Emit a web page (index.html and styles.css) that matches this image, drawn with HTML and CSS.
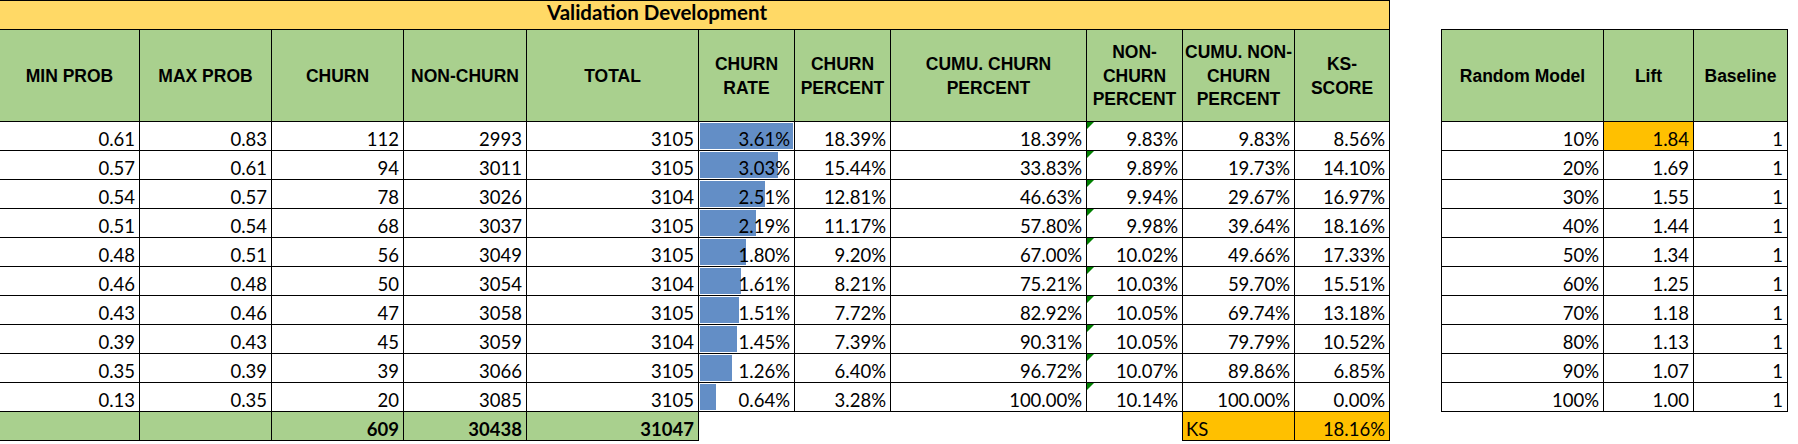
FILE: index.html
```html
<!DOCTYPE html>
<html lang="en">
<head>
<meta charset="utf-8">
<title>Validation Development</title>
<link rel="stylesheet" href="styles.css">
</head>
<body>
<div class="sheet">
  <div class="grid main">
    <div class="c title">Validation Development</div>

    <div class="c h">MIN PROB</div>
    <div class="c h">MAX PROB</div>
    <div class="c h">CHURN</div>
    <div class="c h">NON-CHURN</div>
    <div class="c h">TOTAL</div>
    <div class="c h">CHURN<br>RATE</div>
    <div class="c h">CHURN<br>PERCENT</div>
    <div class="c h">CUMU. CHURN<br>PERCENT</div>
    <div class="c h">NON-<br>CHURN<br>PERCENT</div>
    <div class="c h">CUMU. NON-<br>CHURN<br>PERCENT</div>
    <div class="c h">KS-<br>SCORE</div>

    <div class="c n">0.61</div><div class="c n">0.83</div><div class="c n">112</div><div class="c n">2993</div><div class="c n">3105</div>
    <div class="c n db"><span class="bar" style="width:93px"></span><span class="v">3.61%</span></div>
    <div class="c n">18.39%</div><div class="c n">18.39%</div>
    <div class="c n tc"><span class="tri"></span>9.83%</div><div class="c n">9.83%</div><div class="c n">8.56%</div>

    <div class="c n">0.57</div><div class="c n">0.61</div><div class="c n">94</div><div class="c n">3011</div><div class="c n">3105</div>
    <div class="c n db"><span class="bar" style="width:78px"></span><span class="v">3.03%</span></div>
    <div class="c n">15.44%</div><div class="c n">33.83%</div>
    <div class="c n tc"><span class="tri"></span>9.89%</div><div class="c n">19.73%</div><div class="c n">14.10%</div>

    <div class="c n">0.54</div><div class="c n">0.57</div><div class="c n">78</div><div class="c n">3026</div><div class="c n">3104</div>
    <div class="c n db"><span class="bar" style="width:65px"></span><span class="v">2.51%</span></div>
    <div class="c n">12.81%</div><div class="c n">46.63%</div>
    <div class="c n tc"><span class="tri"></span>9.94%</div><div class="c n">29.67%</div><div class="c n">16.97%</div>

    <div class="c n">0.51</div><div class="c n">0.54</div><div class="c n">68</div><div class="c n">3037</div><div class="c n">3105</div>
    <div class="c n db"><span class="bar" style="width:56px"></span><span class="v">2.19%</span></div>
    <div class="c n">11.17%</div><div class="c n">57.80%</div>
    <div class="c n tc"><span class="tri"></span>9.98%</div><div class="c n">39.64%</div><div class="c n">18.16%</div>

    <div class="c n">0.48</div><div class="c n">0.51</div><div class="c n">56</div><div class="c n">3049</div><div class="c n">3105</div>
    <div class="c n db"><span class="bar" style="width:46px"></span><span class="v">1.80%</span></div>
    <div class="c n">9.20%</div><div class="c n">67.00%</div>
    <div class="c n tc"><span class="tri"></span>10.02%</div><div class="c n">49.66%</div><div class="c n">17.33%</div>

    <div class="c n">0.46</div><div class="c n">0.48</div><div class="c n">50</div><div class="c n">3054</div><div class="c n">3104</div>
    <div class="c n db"><span class="bar" style="width:41px"></span><span class="v">1.61%</span></div>
    <div class="c n">8.21%</div><div class="c n">75.21%</div>
    <div class="c n tc"><span class="tri"></span>10.03%</div><div class="c n">59.70%</div><div class="c n">15.51%</div>

    <div class="c n">0.43</div><div class="c n">0.46</div><div class="c n">47</div><div class="c n">3058</div><div class="c n">3105</div>
    <div class="c n db"><span class="bar" style="width:39px"></span><span class="v">1.51%</span></div>
    <div class="c n">7.72%</div><div class="c n">82.92%</div>
    <div class="c n tc"><span class="tri"></span>10.05%</div><div class="c n">69.74%</div><div class="c n">13.18%</div>

    <div class="c n">0.39</div><div class="c n">0.43</div><div class="c n">45</div><div class="c n">3059</div><div class="c n">3104</div>
    <div class="c n db"><span class="bar" style="width:37px"></span><span class="v">1.45%</span></div>
    <div class="c n">7.39%</div><div class="c n">90.31%</div>
    <div class="c n tc"><span class="tri"></span>10.05%</div><div class="c n">79.79%</div><div class="c n">10.52%</div>

    <div class="c n">0.35</div><div class="c n">0.39</div><div class="c n">39</div><div class="c n">3066</div><div class="c n">3105</div>
    <div class="c n db"><span class="bar" style="width:32px"></span><span class="v">1.26%</span></div>
    <div class="c n">6.40%</div><div class="c n">96.72%</div>
    <div class="c n tc"><span class="tri"></span>10.07%</div><div class="c n">89.86%</div><div class="c n">6.85%</div>

    <div class="c n">0.13</div><div class="c n">0.35</div><div class="c n">20</div><div class="c n">3085</div><div class="c n">3105</div>
    <div class="c n db"><span class="bar" style="width:16px"></span><span class="v">0.64%</span></div>
    <div class="c n">3.28%</div><div class="c n">100.00%</div>
    <div class="c n tc"><span class="tri"></span>10.14%</div><div class="c n">100.00%</div><div class="c n">0.00%</div>

    <div class="c n f"></div><div class="c n f"></div><div class="c n f">609</div><div class="c n f">30438</div><div class="c n f">31047</div>
    <div class="c blank"></div><div class="c blank"></div><div class="c blank"></div><div class="c blank edge"></div>
    <div class="c n ks ks-label">KS</div><div class="c n ks">18.16%</div>
  </div>

  <div class="grid lift">
    <div class="c h">Random Model</div>
    <div class="c h">Lift</div>
    <div class="c h">Baseline</div>

    <div class="c n">10%</div><div class="c n hl">1.84</div><div class="c n">1</div>
    <div class="c n">20%</div><div class="c n">1.69</div><div class="c n">1</div>
    <div class="c n">30%</div><div class="c n">1.55</div><div class="c n">1</div>
    <div class="c n">40%</div><div class="c n">1.44</div><div class="c n">1</div>
    <div class="c n">50%</div><div class="c n">1.34</div><div class="c n">1</div>
    <div class="c n">60%</div><div class="c n">1.25</div><div class="c n">1</div>
    <div class="c n">70%</div><div class="c n">1.18</div><div class="c n">1</div>
    <div class="c n">80%</div><div class="c n">1.13</div><div class="c n">1</div>
    <div class="c n">90%</div><div class="c n">1.07</div><div class="c n">1</div>
    <div class="c n">100%</div><div class="c n">1.00</div><div class="c n">1</div>
  </div>
</div>
</body>
</html>
```

FILE: styles.css
```css
html, body {
  margin: 0;
  padding: 0;
  background: #ffffff;
}

body {
  font-family: "Lato", "Liberation Sans", sans-serif;
  color: #000000;
  overflow: hidden;
}

.sheet {
  display: flex;
  align-items: flex-start;
  gap: 51px;
}

.grid {
  display: grid;
  border-top: 1px solid #000;
  border-left: 1px solid #000;
}

.main {
  margin-left: -1px;
  grid-template-columns: 140px 132px 132px 123px 172px 96px 96px 196px 96px 112px 95px;
  grid-template-rows: 29px 92px repeat(11, 29px);
}

.lift {
  margin-top: 29px;
  grid-template-columns: 162px 90px 94px;
  grid-template-rows: 92px repeat(10, 29px);
}

.c {
  box-sizing: border-box;
  border-right: 1px solid #000;
  border-bottom: 1px solid #000;
  position: relative;
  min-width: 0;
  white-space: nowrap;
}

.title {
  grid-column: 1 / -1;
  background: #ffd966;
  font-family: "Lato", "Liberation Sans", sans-serif;
  font-weight: 700;
  font-size: 20.5px;
  line-height: 23.5px;
  text-align: center;
  padding-right: 75px;
}

.h {
  background: #a9d08e;
  font-family: "Liberation Sans", Arial, sans-serif;
  font-weight: 700;
  font-size: 17.5px;
  line-height: 23.5px;
  display: flex;
  align-items: center;
  justify-content: center;
  text-align: center;
  padding-top: 2px;
}

.n {
  font-size: 18.5px;
  line-height: 22px;
  padding: 6px 4px 0 3px;
  text-align: right;
}

.f {
  background: #a9d08e;
  font-weight: 700;
}

.blank {
  border-right: none;
  border-bottom: none;
}

.blank.edge {
  border-right: 1px solid #000;
}

.ks {
  background: #ffc000;
}

.ks-label {
  text-align: left;
}

.hl {
  background: #ffc000;
}

.db .bar {
  position: absolute;
  left: 1px;
  top: 1px;
  height: 26px;
  background: #638ec6;
}

.db .v {
  position: relative;
}

.tc .tri {
  position: absolute;
  left: 0;
  top: 0;
  width: 0;
  height: 0;
  border-top: 7px solid #008000;
  border-right: 7px solid transparent;
}
```
